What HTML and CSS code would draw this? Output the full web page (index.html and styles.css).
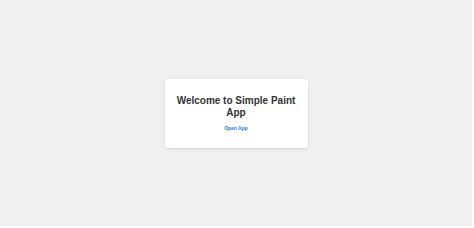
FILE: index.html
```html
<!doctype html>
<html>
<head>
    <meta charset="utf-8">
    <title>Simple Paint App</title>
    <link rel="stylesheet" href="styles.css">
</head>
<body>
<div id="page">
    <div class="card">
        <h1>Welcome to Simple Paint App</h1>
        <a class="openLink" href="#">Open App</a>
    </div>
</div>
</body>
</html>
```

FILE: styles.css
```css
html {
    background-color: #fff;
    font-family: "Liberation Sans", Arial, sans-serif;
}

body {
    margin: 0;
}

#page {
    width: calc(100% - 2px);
    height: 226px;
    background-color: #f0f0f0;
    display: flex;
    align-items: center;
    justify-content: center;
}

.card {
    box-sizing: border-box;
    width: 143px;
    padding: 16px 10px 17px;
    background-color: #fff;
    border-radius: 3px;
    box-shadow: 0 1px 3px rgba(0, 0, 0, 0.12);
    text-align: center;
}

h1 {
    margin: 0;
    font-size: 10px;
    line-height: 12px;
    font-weight: bold;
    color: #333;
}

.openLink {
    display: block;
    margin-top: 6px;
    font-size: 5px;
    line-height: 6px;
    font-weight: bold;
    color: #1a7be0;
    text-decoration: none;
}
```
